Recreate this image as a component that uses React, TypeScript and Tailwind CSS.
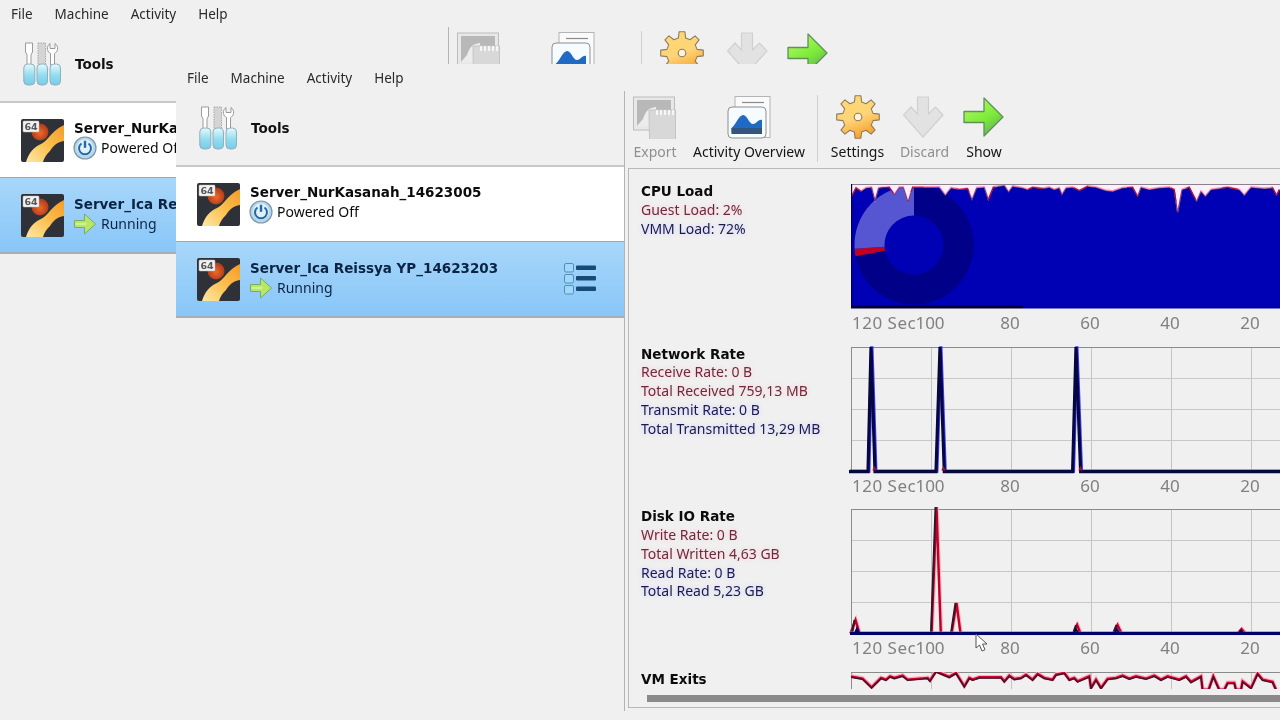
import type { ReactNode } from "react";

const gearPath = (() => {
  const teeth = 8;
  const cx = 22, cy = 22, ro = 21.5, ri = 15.5;
  const pts: string[] = [];
  for (let i = 0; i < teeth; i++) {
    const a = (i / teeth) * Math.PI * 2 - Math.PI / 2;
    const s = (Math.PI * 2) / teeth;
    const seq: [number, number][] = [
      [ri, a - s * 0.3],
      [ro, a - s * 0.17],
      [ro, a + s * 0.17],
      [ri, a + s * 0.3],
    ];
    seq.forEach(([r, t]) => pts.push(`${(cx + r * Math.cos(t)).toFixed(2)} ${(cy + r * Math.sin(t)).toFixed(2)}`));
  }
  return "M" + pts.join(" L") + " Z";
})();

function ToolsIcon() {
  return (
    <svg width="40" height="44" viewBox="0 0 40 44" className="shrink-0">
      <defs>
        <linearGradient id="handle" x1="0" y1="0" x2="0" y2="1">
          <stop offset="0" stopColor="#e6f8fc" />
          <stop offset="0.55" stopColor="#92dcf0" />
          <stop offset="1" stopColor="#78cce6" />
        </linearGradient>
      </defs>
      <path d="M2.500 1h7v9l-1.500 3v11h-4v-11l-1.500-3z" fill="#fff" stroke="#9a9a9a" />
      <rect x="15" y="1" width="7.500" height="23" fill="#d4d4d4" stroke="#a8a8a8" strokeDasharray="1.500 1" />
      <path d="M27 1.500c-2 1.500-3 3.500-2.500 6 .4 2 1.500 3.200 3 4v12h4v-12c1.500-.8 2.600-2 3-4 .5-2.500-.5-4.500-2.500-6v5h-5z" fill="#fff" stroke="#9a9a9a" />
      <rect x="0.800" y="22" width="11" height="21" rx="4" fill="url(#handle)" stroke="#8fb0be" />
      <rect x="14" y="22" width="10.500" height="21" rx="4" fill="url(#handle)" stroke="#8fb0be" />
      <rect x="27" y="22" width="10.500" height="21" rx="4" fill="url(#handle)" stroke="#8fb0be" />
    </svg>
  );
}

function OsIcon({ id }: { id: string }) {
  return (
    <svg width="43" height="43" viewBox="0 0 43 43" className="shrink-0">
      <defs>
        <linearGradient id={id} x1="0" y1="1" x2="1" y2="0">
          <stop offset="0" stopColor="#ffe8a8" />
          <stop offset="0.5" stopColor="#fbc050" />
          <stop offset="1" stopColor="#f49c28" />
        </linearGradient>
        <radialGradient id={id + "b"} cx="0.5" cy="0.55" r="0.6">
          <stop offset="0" stopColor="#ee6a2a" />
          <stop offset="1" stopColor="#a83416" />
        </radialGradient>
      </defs>
      <rect width="43" height="43" rx="2" fill="#2e3138" />
      <circle cx="19" cy="13" r="8.500" fill={`url(#${id}b)`} />
      <path d="M5 43C8 33 13 28 20 25C27 22 31 11 43 6V22C36 23 32 27 29 32C25 36 23 39 22 43Z" fill={`url(#${id})`} />
      <rect x="2" y="2" width="16" height="11" rx="1" fill="#f2f2f2" stroke="#bbb" strokeWidth="0.5" />
      <text x="10" y="11" textAnchor="middle" fontSize="9.500" fontWeight="700" fontFamily="DejaVu Sans" fill="#555">64</text>
    </svg>
  );
}

function PowerIcon() {
  return (
    <svg width="24" height="24" viewBox="0 0 24 24" className="shrink-0">
      <circle cx="12" cy="12" r="11" fill="#b8d6e8" stroke="#7897ac" strokeWidth="1.200" />
      <circle cx="12" cy="11.500" r="8" fill="#e2f0f8" />
      <path d="M8.500 7.500a6 6 0 1 0 7 0" fill="none" stroke="#1f6aa5" strokeWidth="2" />
      <path d="M12 4.800v7" stroke="#1f6aa5" strokeWidth="2.400" />
    </svg>
  );
}

function RunIcon() {
  return (
    <svg width="24" height="24" viewBox="0 0 24 24" className="shrink-0">
      <path d="M1.500 8.500h10V2l11 10-11 10v-6.500h-10z" fill="#b6e866" stroke="#7aa86a" strokeWidth="1" />
      <path d="M2.500 12h11" stroke="#e8f8c0" strokeWidth="1" />
    </svg>
  );
}

function ListIcon() {
  return (
    <svg width="34" height="34" viewBox="0 0 34 34" className="shrink-0">
      {[1.500, 12.500, 23.500].map((y) => (
        <rect key={y} x="1.500" y={y} width="9" height="8.500" rx="1.500" fill="#9fd8fb" stroke="#4f8fb8" />
      ))}
      {[3.500, 14, 24.500].map((y) => (
        <rect key={y} x="13" y={y} width="20" height="4.500" rx="1" fill="#174a76" />
      ))}
    </svg>
  );
}

function ExportIcon() {
  return (
    <svg width="44" height="44" viewBox="0 0 44 44">
      <rect x="0.500" y="2" width="41" height="33" fill="#e8e8e8" stroke="#bcbcbc" />
      <rect x="4" y="5" width="34" height="26" fill="#b8b8b8" />
      <path d="M4 31L10 24C13 15 16 13 23 12V31Z" fill="#ececec" />
      <path d="M16 15h22l4.500 0v30h-26z" fill="#d8d8d8" stroke="#c4c4c4" />
      <path d="M24 15v5M28 15v5M32 15v5M36 15v5M40 15v5" stroke="#f6f6f6" strokeWidth="2" />
    </svg>
  );
}

function ActivityIcon() {
  return (
    <svg width="44" height="44" viewBox="0 0 44 44">
      <rect x="8" y="1.500" width="35" height="41" fill="#fafafa" stroke="#b4b4b4" />
      <path d="M15 7.500h22" stroke="#8c8c8c" strokeWidth="1.200" />
      <rect x="1" y="12" width="38" height="31" rx="4" fill="#f5fbff" stroke="#8f8f8f" />
      <path d="M4.500 37V33C9 30 11 21 16 20C20 19.500 22 29 26 29C30 29 31 24 35 25V37Z" fill="#1f6ac4" />
      <rect x="4.500" y="33" width="30.500" height="6" fill="#31557f" />
    </svg>
  );
}

function GearIcon() {
  return (
    <svg width="44" height="44" viewBox="0 0 44 44">
      <defs>
        <linearGradient id="gearFill" x1="0.300" y1="0" x2="0.700" y2="1">
          <stop offset="0" stopColor="#ffd970" />
          <stop offset="0.5" stopColor="#fdd478" />
          <stop offset="1" stopColor="#f59a20" />
        </linearGradient>
      </defs>
      <path d={gearPath} fill="url(#gearFill)" stroke="#8f7b60" strokeWidth="1.100" strokeLinejoin="round" />
      <circle cx="22" cy="22" r="3.800" fill="#fdf4dc" stroke="#8f7b60" strokeWidth="1.100" />
    </svg>
  );
}

function DiscardIcon() {
  return (
    <svg width="44" height="44" viewBox="2 0 44 44">
      <path d="M16.500 2h11v17l7-7 7.500 8L22 42 2.500 20l7.500-8 6.500 7z" fill="#e2e2e2" stroke="#d0d0d0" strokeWidth="1.200" />
    </svg>
  );
}

function ShowIcon() {
  return (
    <svg width="44" height="44" viewBox="0 0 44 44">
      <defs>
        <linearGradient id="showFill" x1="0" y1="0" x2="0.600" y2="1">
          <stop offset="0" stopColor="#c2fa70" />
          <stop offset="0.65" stopColor="#7cea38" />
          <stop offset="1" stopColor="#6ab858" />
        </linearGradient>
      </defs>
      <path d="M2 16.500h20V3l19 19-19 19V27.500H2z" fill="url(#showFill)" stroke="#5f8f5c" strokeWidth="1.300" strokeLinejoin="round" />
    </svg>
  );
}

function ToolButton({ label, icon, width, muted, showLabel }: { label: string; icon: ReactNode; width: string; muted?: boolean; showLabel: boolean }) {
  return (
    <div className={`flex flex-col items-center shrink-0 ${width}`}>
      <div className="w-[44px] h-[44px] shrink-0">{icon}</div>
      {showLabel && (
        <div className={`mt-[3px] h-[20px] leading-[20px] text-[14px] whitespace-nowrap ${muted ? "text-[#8f8f8f]" : "text-[#151515]"}`}>{label}</div>
      )}
    </div>
  );
}

function GridLines() {
  return (
    <g>
      {[80, 160, 240, 320, 400].map((x) => (
        <line key={x} x1={x + 0.5} y1="0" x2={x + 0.5} y2="125" stroke="#c4c4c4" />
      ))}
      {[31, 62, 93].map((y) => (
        <line key={y} x1="0" y1={y + 0.5} x2="481" y2={y + 0.5} stroke="#c8c8c8" />
      ))}
      <line x1="0" y1="0.500" x2="481" y2="0.500" stroke="#8a8a8a" />
      <line x1="0.500" y1="0" x2="0.500" y2="125" stroke="#8a8a8a" />
    </g>
  );
}

const cpuPts: [number, number][] = [[37,65],[50,40],[65,50],[80,40],[97,38],[107,78],[118,40],[150,38],[165,60],[180,38],[192,38],[206,82],[220,38],[300,38],[318,62],[335,40],[360,45],[385,42],[398,75],[412,40],[435,38],[447,75],[462,38],[495,32],[508,52],[520,35],[550,40],[565,45],[580,38],[610,42],[630,38],[645,45],[660,40],[668,60],[680,40],[700,38],[720,48],[745,35],[770,38],[800,48],[820,50],[850,40],[880,38],[895,65],[905,38],[930,45],[960,40],[990,38],[1005,45],[1015,115],[1028,45],[1050,38],[1072,80],[1085,50],[1098,65],[1115,45],[1165,38],[1200,45],[1215,62],[1235,38],[1275,42],[1300,40],[1312,62],[1320,45]];
const cpuCoords = cpuPts.map(([x, y]) => `${(x / 3 - 11.7).toFixed(1)},${(y / 3 - 9).toFixed(1)}`);
const cpuLine = cpuCoords.join(" ");
const cpuMask = `0,0 481,0 ${[...cpuCoords].reverse().join(" ")} 0,12`;

const exitPts: [number, number][] = [[33,530],[70,537],[97,563],[125,535],[140,540],[152,530],[165,535],[190,528],[205,540],[265,535],[272,543],[290,515],[330,532],[350,520],[375,560],[390,535],[400,540],[420,533],[485,533],[495,545],[510,528],[525,538],[545,535],[560,525],[580,540],[595,523],[615,535],[640,540],[650,525],[675,520],[690,540],[705,535],[715,545],[750,530],[755,565],[770,540],[785,565],[805,538],[830,535],[850,528],[870,537],[890,530],[920,537],[945,528],[965,540],[985,530],[1020,540],[1040,530],[1055,547],[1085,530],[1090,570],[1108,570],[1122,530],[1140,570],[1155,570],[1165,550],[1185,550],[1190,570],[1205,570],[1210,545],[1235,565],[1255,522],[1270,540],[1300,547],[1310,570]];
const exitLine = exitPts.map(([x, y]) => `${(x / 3 - 11.7).toFixed(1)},${(y / 3 - 172).toFixed(1)}`).join(" ");

function arc(r0: number, r1: number, a0: number, a1: number) {
  const p = (r: number, a: number) => {
    const t = (a - 90) * (Math.PI / 180);
    return `${(63 + r * Math.cos(t)).toFixed(2)} ${(61 + r * Math.sin(t)).toFixed(2)}`;
  };
  const large = a1 - a0 > 180 ? 1 : 0;
  return `M${p(r1, a0)} A${r1} ${r1} 0 ${large} 1 ${p(r1, a1)} L${p(r0, a1)} A${r0} ${r0} 0 ${large} 0 ${p(r0, a0)} Z`;
}

function CpuChart() {
  return (
    <svg width="481" height="125" viewBox="0 0 481 125" className="block shrink-0">
      <rect x="0" y="0" width="481" height="124" fill="#0000b4" />
      <path d={arc(29.5, 59.5, 0, 259)} fill="#000088" />
      <path d={arc(29.5, 59.5, 259, 266.5)} fill="#c00020" />
      <path d={arc(29.5, 59.5, 266.5, 360)} fill="#5656d2" />
      <polygon points={cpuMask} fill="#fdf0fa" />
      <polyline points={cpuLine} fill="none" stroke="#ff90c0" strokeWidth="1.300" transform="translate(0 -1)" />
      <polyline points={cpuLine} fill="none" stroke="#1a0a50" strokeWidth="1" opacity="0.650" />
      <polyline points={cpuLine} fill="none" stroke="#b80c30" strokeWidth="1.100" strokeDasharray="16 40" transform="translate(0 -0.500)" />
      <line x1="0" y1="0.500" x2="481" y2="0.500" stroke="#8a7f8a" />
      <line x1="0.500" y1="0" x2="0.500" y2="124" stroke="#000050" strokeWidth="1.400" />
      <line x1="0" y1="123" x2="172" y2="123" stroke="#00003c" strokeWidth="3" />
      <line x1="172" y1="123.500" x2="481" y2="123.500" stroke="#0000a0" strokeWidth="2" />
    </svg>
  );
}

function NetChart() {
  const d = "M-2 124.700H17L20 0L24 124.700H85L89 0L93.300 124.700H221.600L225 0L229.600 124.700H481";
  return (
    <svg width="481" height="125" viewBox="0 0 481 125" className="block shrink-0 overflow-visible">
      <GridLines />
      <path d={d} transform="translate(0.800 -0.600)" fill="none" stroke="#4040ff" strokeWidth="3.400" />
      <path d={d} fill="none" stroke="#060640" strokeWidth="3.200" />
      <path d="M22 123.500l1.500-3 1.500 3M91 123.500l1.500-3 1.500 3M228 123.500l1.500-3 1.500 3" fill="none" stroke="#a01030" strokeWidth="1.500" />
    </svg>
  );
}

function DiskChart() {
  const d = "M-1 124.500L4 111L8 124.500H80L85 -2L89.300 124.500H100L105 94L109 124.500H222L225.600 116L229 124.500H262L266 116L270 124.500H386L390 120L394 124.500H481";
  return (
    <svg width="481" height="125" viewBox="0 0 481 125" className="block shrink-0 overflow-visible">
      <GridLines />
      <path d={d} fill="none" stroke="#ffb0c0" strokeWidth="3.600" transform="translate(1 0)" />
      <path d={d} fill="none" stroke="#c00028" strokeWidth="2.400" transform="translate(0.500 0)" />
      <path d="M80 124.500L84.500 -2M100 124.500L104.500 94M1 124.500L3.500 111M222 124.500L225 116M262 124.500L265.500 116" fill="none" stroke="#301828" strokeWidth="2" />
      <line x1="-1" y1="123" x2="481" y2="123" stroke="#7070ff" strokeWidth="1" />
      <line x1="-1" y1="124.600" x2="481" y2="124.600" stroke="#00006c" strokeWidth="3" />
      <path d="M4 124L6 119.500L8 124M223 124L225 120.500L227.500 124M263.500 124L266 120.500L268 124M388 124L390 121.500L392 124" fill="none" stroke="#00006c" strokeWidth="2" />
    </svg>
  );
}

function ExitChart() {
  return (
    <svg width="481" height="125" viewBox="0 0 481 125" className="block shrink-0">
      <GridLines />
      <polyline points={exitLine} fill="none" stroke="#ffb0c0" strokeWidth="4" transform="translate(0 -0.800)" />
      <polyline points={exitLine} fill="none" stroke="#d00030" strokeWidth="2.400" transform="translate(0 -0.400)" />
      <polyline points={exitLine} fill="none" stroke="#301828" strokeWidth="1.300" transform="translate(0 0.400)" />
    </svg>
  );
}

type Tone = "red" | "blue";

function Metric({ title, lines, chart, axis = true }: { title: string; lines: [string, Tone][]; chart: ReactNode; axis?: boolean }) {
  return (
    <div className="flex h-[162.67px] shrink-0">
      <div className="w-[222px] shrink-0 pl-[12px] pt-px text-[14px] leading-[18.75px]">
        <div className="font-['DejaVu_Sans',sans-serif] font-bold text-[13.5px] text-[#0c0c0c]">{title}</div>
        {lines.map(([t, tone]) => (
          <div key={t} className={tone === "red" ? "text-[#6e2a3c] [text-shadow:0_0_5px_#ffc4d0]" : "text-[#1a1a50] [text-shadow:0_0_5px_#c8c8ff]"}>{t}</div>
        ))}
      </div>
      <div className="flex flex-col shrink-0 pt-[3px]">
        {chart}
        {axis && (
          <div className="flex mt-[2px] h-[24px] leading-[24px] text-[17px] text-[#808080]">
            <div className="w-[39px] pl-[1px] whitespace-nowrap shrink-0 tracking-[0.5px]">120 Sec</div>
            {["100", "80", "60", "40", "20"].map((n) => (
              <div key={n} className="w-[80px] text-center shrink-0">{n}</div>
            ))}
          </div>
        )}
      </div>
    </div>
  );
}

function Details() {
  return (
    <div className="flex flex-col h-[540px] border border-[#b8b8b8] ml-[3px] border-r-0 overflow-hidden">
      <div className="h-[520px] shrink-0 overflow-hidden pt-[12px]">
        <Metric title="CPU Load" chart={<CpuChart />} lines={[["Guest Load: 2%", "red"], ["VMM Load: 72%", "blue"]]} />
        <Metric title="Network Rate" chart={<NetChart />} lines={[["Receive Rate: 0 B", "red"], ["Total Received 759,13 MB", "red"], ["Transmit Rate: 0 B", "blue"], ["Total Transmitted 13,29 MB", "blue"]]} />
        <Metric title="Disk IO Rate" chart={<DiskChart />} lines={[["Write Rate: 0 B", "red"], ["Total Written 4,63 GB", "red"], ["Read Rate: 0 B", "blue"], ["Total Read 5,23 GB", "blue"]]} />
        <Metric title="VM Exits" chart={<ExitChart />} lines={[]} axis={false} />
      </div>
      <div className="pl-[18px] pt-[6px] pb-[5px]">
        <div className="h-[7px] bg-[#8a8a8a]" />
      </div>
    </div>
  );
}

function VmRow({ name, status, selected, id }: { name: string; status: string; selected?: boolean; id: string }) {
  return (
    <div className={selected ? "flex items-center h-[77px] pl-[21px] pr-[27px] border-t border-t-[#74b4dc] border-b-2 border-b-[#a6aeb4] bg-gradient-to-b from-[#a8d7fa] to-[#88c6f8] text-[#0b2444]" : "flex items-center h-[74px] pl-[21px] pr-[27px] bg-white text-[#0c0c0c]"}>
      <OsIcon id={id} />
      <div className={`ml-[10px] flex-1 min-w-0 ${selected ? "pb-[3px]" : "pb-[5px]"}`}>
        <div className="font-['DejaVu_Sans',sans-serif] font-bold text-[13.5px] leading-[20px] whitespace-nowrap">{name}</div>
        <div className="flex items-center h-[20px] whitespace-nowrap text-[14px]">
          <div className="-ml-px mr-[4px] flex">{selected ? <RunIcon /> : <PowerIcon />}</div>
          {status}
        </div>
      </div>
      {selected && <ListIcon />}
    </div>
  );
}

function VBoxWindow({ prefix, details }: { prefix: string; details?: boolean }) {
  const showLabel = !!details;
  return (
    <div className="flex flex-col w-full h-full bg-[#f0f0f0]">
      <div className="flex items-center gap-[22px] pl-[11px] pt-px h-[27px] shrink-0 text-[13.5px] text-[#2a2a2a]">
        <span>File</span>
        <span>Machine</span>
        <span>Activity</span>
        <span>Help</span>
      </div>
      <div className="flex flex-1 min-h-0 items-start">
        <div className="w-[448px] shrink-0 overflow-hidden">
          <div className="flex items-center h-[74px] pl-[23px] gap-[12px]">
            <ToolsIcon />
            <span className="font-['DejaVu_Sans',sans-serif] font-bold text-[13.5px] text-[#111]">Tools</span>
          </div>
          <div className="border-t-2 border-t-[#c8c8c8]">
            <VmRow id={prefix + "a"} name="Server_NurKasanah_14623005" status="Powered Off" />
            <VmRow id={prefix + "b"} name="Server_Ica Reissya YP_14623203" status="Running" selected />
          </div>
        </div>
        <div className="flex-1 min-w-0 h-[620px] border-l border-l-[#b4b4b4]">
          <div className="flex h-[77px] pl-[8px] pt-[4px]">
            <ToolButton showLabel={showLabel} label="Export" width="w-[44px]" muted icon={<ExportIcon />} />
            <ToolButton showLabel={showLabel} label="Activity Overview" width="w-[112px] ml-[16px]" icon={<ActivityIcon />} />
            <div className="w-px h-[67px] bg-[#cfcfcf] ml-[12px] mr-[13px] shrink-0" />
            <ToolButton showLabel={showLabel} label="Settings" width="w-[53px]" icon={<GearIcon />} />
            <ToolButton showLabel={showLabel} label="Discard" width="w-[47px] ml-[17px]" muted icon={<DiscardIcon />} />
            <ToolButton showLabel={showLabel} label="Show" width="w-[44px] ml-[14px]" icon={<ShowIcon />} />
          </div>
          {details && <Details />}
        </div>
      </div>
    </div>
  );
}

export default function App() {
  return (
    <div className="relative w-[1280px] h-[720px] overflow-hidden bg-[#f0f0f0] font-['Noto_Sans',sans-serif] blur-[0.4px]">
      <VBoxWindow prefix="back" />
      <div className="absolute left-[176px] top-[64px] w-[1104px] h-[656px]">
        <VBoxWindow prefix="front" details />
      </div>
      <svg width="14" height="20" viewBox="0 0 14 20" className="absolute left-[975px] top-[633px]">
        <path d="M1 1v14l3.500-3 2.500 6 3-1.300-2.500-5.700h4.500z" fill="#fff" stroke="#555" strokeWidth="1" />
      </svg>
    </div>
  );
}
